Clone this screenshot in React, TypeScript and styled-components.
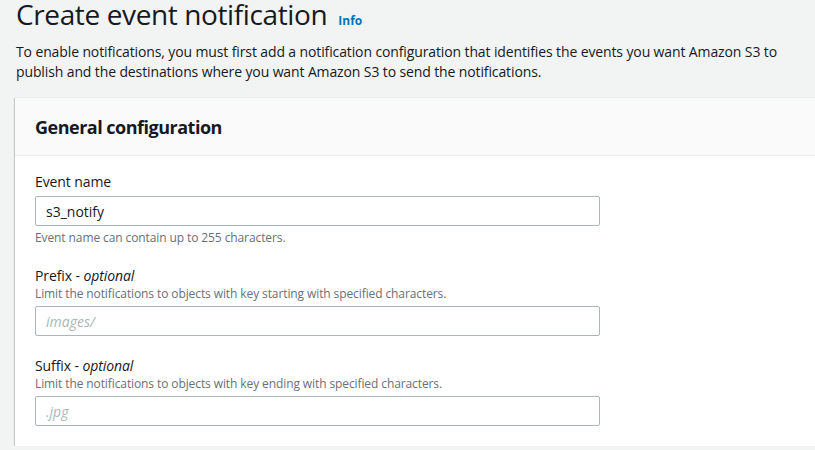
import React from "react";
import styled, { createGlobalStyle } from "styled-components";

const GlobalStyle = createGlobalStyle`
  html, body {
    margin: 0;
    padding: 0;
    background: #f2f3f3;
    font-family: "Open Sans", "Noto Sans", sans-serif;
    color: #16191f;
    overflow: hidden;
  }
`;

const Page = styled.main`
  padding: 0 0 0 16px;
  width: 815px;
  height: 450px;
  box-sizing: border-box;
`;

const TitleRow = styled.div`
  display: flex;
  align-items: baseline;
  gap: 11px;
  margin-top: -4px;
`;

const Title = styled.h1`
  margin: 0;
  font-size: 28px;
  line-height: 36px;
  font-weight: 400;
  letter-spacing: -0.38px;
`;

const InfoLink = styled.a`
  font-size: 12px;
  font-weight: 700;
  color: #0073bb;
  text-decoration: none;
`;

const Intro = styled.p`
  margin: 10px 0 0;
  font-size: 14px;
  line-height: 20px;
  width: 780px;
  letter-spacing: -0.12px;
`;

const Card = styled.section`
  margin-top: 15px;
  margin-left: -1px;
  width: 820px;
  background: #fff;
  border-top: 1px solid #eaeded;
  box-shadow: 0 1px 1px 0 rgba(0, 28, 36, 0.3), 1px 1px 1px 0 rgba(0, 28, 36, 0.15),
    -1px 1px 1px 0 rgba(0, 28, 36, 0.15);
`;

const CardHeader = styled.header`
  background: #fafafa;
  border-bottom: 1px solid #eaeded;
  padding: 0 20px;
  height: 57px;
  display: flex;
  align-items: center;
`;

const CardTitle = styled.h2`
  margin: 0;
  font-size: 18px;
  font-weight: 700;
  line-height: 22px;
  letter-spacing: -0.5px;
`;

const CardBody = styled.div`
  padding: 16px 20px 20px;
  display: flex;
  flex-direction: column;
  gap: 20px;
`;

const Field = styled.div`
  display: flex;
  flex-direction: column;
`;

const Label = styled.label`
  font-size: 14px;
  line-height: 20px;
  font-weight: 400;
  letter-spacing: -0.1px;
  em {
    font-style: italic;
  }
`;

const Hint = styled.div<{ $below?: boolean }>`
  font-size: 12px;
  line-height: 16px;
  color: #687078;
  letter-spacing: -0.1px;
  margin-top: ${(p) => (p.$below ? "4px" : "0")};
  margin-bottom: ${(p) => (p.$below ? "0" : "4px")};
`;

const Input = styled.input`
  box-sizing: border-box;
  width: 565px;
  height: 30px;
  margin-top: ${(p) => (p.value ? "4px" : "0")};
  border: 1px solid #aab7b8;
  border-radius: 2px;
  padding: 4px 10px;
  font-family: inherit;
  font-size: 14px;
  color: #16191f;
  background: #fff;
  outline: none;
  &::placeholder {
    color: #aab7b8;
    font-style: italic;
  }
`;

export default function App() {
  return (
    <>
      <GlobalStyle />
      <Page>
        <TitleRow>
          <Title>Create event notification</Title>
          <InfoLink href="#">Info</InfoLink>
        </TitleRow>
        <Intro>
          To enable notifications, you must first add a notification configuration that identifies the events you
          want Amazon S3 to publish and the destinations where you want Amazon S3 to send the notifications.
        </Intro>
        <Card>
          <CardHeader>
            <CardTitle>General configuration</CardTitle>
          </CardHeader>
          <CardBody>
            <Field>
              <Label>Event name</Label>
              <Input value="s3_notify" readOnly />
              <Hint $below>Event name can contain up to 255 characters.</Hint>
            </Field>
            <Field>
              <Label>
                Prefix - <em>optional</em>
              </Label>
              <Hint>Limit the notifications to objects with key starting with specified characters.</Hint>
              <Input placeholder="images/" />
            </Field>
            <Field>
              <Label>
                Suffix - <em>optional</em>
              </Label>
              <Hint>Limit the notifications to objects with key ending with specified characters.</Hint>
              <Input placeholder=".jpg" />
            </Field>
          </CardBody>
        </Card>
      </Page>
    </>
  );
}
